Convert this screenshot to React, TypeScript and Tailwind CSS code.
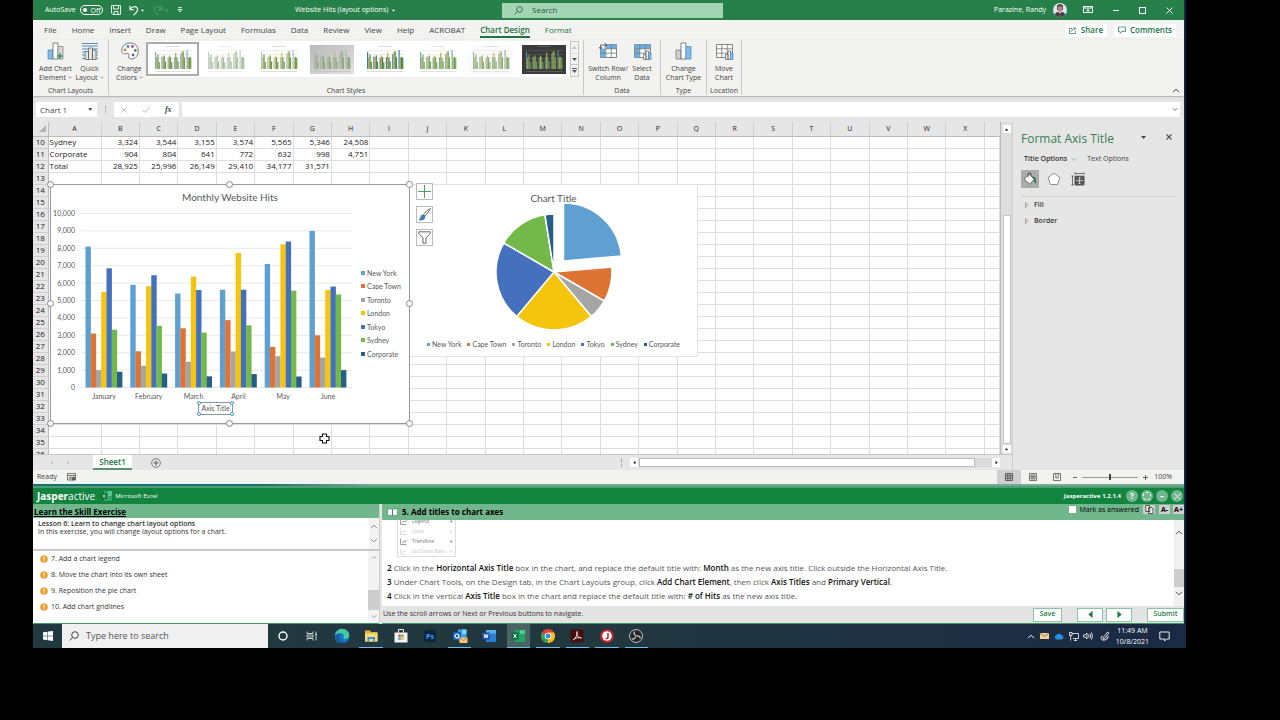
import React from "react";

const MONTHS = ["January", "February", "March", "April", "May", "June"];

const SERIES = [
  { name: "New York", color: "#5f9fd2", dot: "bg-[#5f9fd2]", values: [8100, 5900, 5400, 5620, 7100, 9000] },
  { name: "Cape Town", color: "#dd7433", dot: "bg-[#dd7433]", values: [3100, 2080, 3400, 3870, 2330, 3000] },
  { name: "Toronto", color: "#a5a5a5", dot: "bg-[#a5a5a5]", values: [1000, 1250, 1480, 2070, 1800, 1720] },
  { name: "London", color: "#f4c50c", dot: "bg-[#f4c50c]", values: [5500, 5820, 6370, 7730, 8230, 5600] },
  { name: "Tokyo", color: "#4470bd", dot: "bg-[#4470bd]", values: [6850, 6450, 5600, 5620, 8390, 5800] },
  { name: "Sydney", color: "#72b94a", dot: "bg-[#72b94a]", values: [3324, 3544, 3155, 3574, 5565, 5346] },
  { name: "Corporate", color: "#255e88", dot: "bg-[#255e88]", values: [904, 804, 641, 772, 632, 998] },
];

const COLUMNS = "ABCDEFGHIJKLMNOPQRSTUVWX".split("");

const ROWS: Record<number, string[]> = {
  10: ["Sydney", "3,324", "3,544", "3,155", "3,574", "5,565", "5,346", "24,508"],
  11: ["Corporate", "904", "804", "641", "772", "632", "998", "4,751"],
  12: ["Total", "28,925", "25,996", "26,149", "29,410", "34,177", "31,571"],
};

const Caret = ({ className = "" }: { className?: string }) => (
  <svg className={className} width="5" height="3" viewBox="0 0 5 3">
    <path d="M0 0h5L2.5 3z" fill="currentColor" />
  </svg>
);

const Chevron = ({ className = "" }: { className?: string }) => (
  <svg className={className} width="8" height="5" viewBox="0 0 8 5" fill="none" stroke="currentColor">
    <path d="M1 4.2 4 1.2l3 3" />
  </svg>
);

const TitleBar = () => (
  <header className="flex h-5 items-center bg-[#278049] text-[7px] text-white">
    <div className="flex w-[262px] items-center pl-3">
      <label htmlFor="autosave">AutoSave</label>
      <button id="autosave" className="ml-1 flex h-[10px] w-[23px] items-center gap-1 rounded-full border border-white pl-[2px] leading-none">
        <span className="h-1 w-1 rounded-full bg-white" />
        Off
      </button>
      <button aria-label="Save" className="ml-2">
        <svg width="10" height="10" viewBox="0 0 10 10" fill="none" stroke="#fff" strokeWidth=".9">
          <path d="M.5.5h9v9h-7.500l-1.500-1.500zM2.500.5v3.500h5V.5M3 9.500V6.500h4v3" />
        </svg>
      </button>
      <button aria-label="Undo" className="ml-2 flex items-center gap-px">
        <svg width="10" height="11" viewBox="0 0 10 11" fill="none" stroke="#fff" strokeWidth="1.100">
          <path d="M1 .8v4h4M1.200 4.600C3 1.500 6 1 7.700 2.500S9 6.500 4.500 10.300" />
        </svg>
        <Caret className="scale-75" />
      </button>
      <button aria-label="Redo" className="ml-2 flex items-center gap-px opacity-25">
        <svg width="10" height="11" viewBox="0 0 10 11" fill="none" stroke="#fff">
          <path d="M9 .8v4H5M8.800 4.600C7 1.500 4 1 2.300 2.500S1 6.500 5.500 10.300" />
        </svg>
        <Caret className="scale-75" />
      </button>
      <button aria-label="Customize Quick Access Toolbar" className="ml-2">
        <svg width="6" height="6" viewBox="0 0 6 6" fill="none" stroke="#fff" strokeWidth=".8">
          <path d="M1 .6h4M1 2.500h4L3 5z" />
        </svg>
      </button>
    </div>
    <button className="flex w-[207px] items-center">
      Website Hits (layout options)
      <Caret className="ml-[3px] scale-75" />
    </button>
    <div className="flex h-[15px] w-[221px] items-center bg-[#a3d5b4] pl-3 text-[8px] text-[#24593a]">
      <svg width="9" height="9" viewBox="0 0 9 9" fill="none" stroke="currentColor" strokeWidth=".8">
        <circle cx="5.500" cy="3.500" r="2.800" />
        <path d="M3.500 5.500.5 8.500" />
      </svg>
      <input aria-label="Search" placeholder="Search" className="ml-[9px] w-40 bg-transparent outline-none placeholder:text-[#24593a]" />
    </div>
    <div className="ml-auto flex items-center">
      <span>Parazine, Randy</span>
      <svg className="ml-[7px]" width="14" height="14" viewBox="0 0 14 14">
        <clipPath id="avatar"><circle cx="7" cy="7" r="7" /></clipPath>
        <g clipPath="url(#avatar)">
          <path fill="#dbe4ea" d="M0 0h14v14H0z" />
          <path fill="#4d4248" d="M4 2.500Q7-.5 10 2.500V7H4z" />
          <path fill="#bd8277" d="M4.700 3.500h4.600v4L7 9.500l-2.300-2z" />
          <path fill="#39424f" d="M1 14q1-5 4-5l2 1.500L9 9q3 0 4 5z" />
          <path fill="#a83844" d="M6.500 10h1l.5 4H6z" />
        </g>
      </svg>
      <button aria-label="Ribbon Display Options" className="ml-4">
        <svg width="10" height="8" viewBox="0 0 10 8" fill="none" stroke="#fff">
          <path d="M.5.5h9v6h-9zM.5 2h9M5 6.500v-3M3.500 4.700 5 3.300l1.500 1.400" />
        </svg>
      </button>
      <button aria-label="Minimize" className="ml-5 h-px w-[6px] bg-white" />
      <button aria-label="Maximize" className="ml-5 h-[7px] w-[7px] border border-white" />
      <button aria-label="Close" className="mr-[11px] ml-5">
        <svg width="7" height="7" viewBox="0 0 7 7" stroke="#fff"><path d="m.5.5 6 6M6.500.5l-6 6" /></svg>
      </button>
    </div>
  </header>
);

const TABS = ["File", "Home", "Insert", "Draw", "Page Layout", "Formulas", "Data", "Review", "View", "Help", "ACROBAT"];

const RibbonTabs = () => (
  <nav className="flex h-5 items-center gap-[15px] bg-[#f2f2f0] pr-2 pl-[11px] text-[8px] leading-3 text-[#444]">
    {TABS.map((tab) => (
      <button key={tab}>{tab}</button>
    ))}
    <button className="border-b-2 border-[#217346] pt-[2px] font-semibold text-[#217346]">Chart Design</button>
    <button className="text-[#217346]">Format</button>
    <button className="ml-auto flex h-[13px] items-center gap-1 bg-white px-1 font-semibold text-[#217346]">
      <svg width="8" height="8" viewBox="0 0 8 8" fill="none" stroke="currentColor" strokeWidth=".7">
        <path d="M3 2.500H.5v5h6V5M2.500 5.500q0-3 3.500-3M4.800.8l2 1.700-2 1.700" />
      </svg>
      Share
    </button>
    <button className="-ml-2 flex h-[13px] items-center gap-1 bg-white px-1 font-semibold text-[#217346]">
      <svg width="8" height="8" viewBox="0 0 8 8" fill="none" stroke="currentColor" strokeWidth=".7">
        <path d="M.5 1h7v4.500H4L2 7.300V5.500H.5z" />
      </svg>
      Comments
    </button>
  </nav>
);

const RibbonButton = ({ icon, lines, width, menu }: { icon: React.ReactNode; lines: string[]; width: string; menu?: boolean }) => (
  <button className={`flex flex-col items-center text-[7px] leading-[9px] text-[#444] ${width}`}>
    <span className="mb-[3px] flex h-5 items-center">{icon}</span>
    <span className="whitespace-nowrap">{lines[0]}</span>
    <span className="flex items-center gap-[2px] whitespace-nowrap">
      {lines[1]}
      {menu && <Chevron className="w-1 rotate-180" />}
    </span>
  </button>
);

const Group = ({ label, width, children }: { label: string; width: string; children: React.ReactNode }) => (
  <section className={`flex flex-col border-r border-[#c8c8c6] ${width}`}>
    <div className="flex flex-1 justify-center pt-px">{children}</div>
    <h2 className="text-center text-[7px] leading-[9px] text-[#444]">{label}</h2>
  </section>
);

const ChartTypeIcon = ({ plus }: { plus?: boolean }) => (
  <svg width="17" height="18" viewBox="0 0 17 18" strokeWidth=".8">
    <path d="M1 8h5v9H1z" fill={plus ? "#83bce8" : "#d0d0d0"} stroke={plus ? "#4f91c5" : "#777"} />
    <path d="M6 1h5v16H6z" fill="#fff" stroke="#666" />
    <path d="M11 4.500h5V17h-5z" fill={plus ? "#d6d6d6" : "#83bce8"} stroke={plus ? "#888" : "#4f91c5"} />
    {plus && <path d="M13 11v6M10 14h6" stroke="#3e9a5d" strokeWidth="1.500" />}
  </svg>
);

const QuickLayoutIcon = () => (
  <svg width="18" height="18" viewBox="0 0 18 18">
    <path d="M1 1.500h16M1 4h16M1 7h16M1 10h16M1 13h16M1 16.500h16" stroke="#4e8fc4" />
    <path d="M4 9.500h3.500v8H4zM7.500 6h4v11.500h-4zM11.500 8H15v9.500h-3.500z" fill="#e4e4e4" stroke="#666" strokeWidth=".8" />
  </svg>
);

const PaletteIcon = () => (
  <svg width="18" height="18" viewBox="0 0 18 18">
    <path d="M9 1C4 1 .8 4.300.8 8.500c0 3 2.200 4 4.200 3 1.800-.8 3.500.2 2.800 2-.6 2 .6 3.700 3.200 3.500 4-.3 6.200-4 6.200-8C17.200 4 14 1 9 1z" fill="#fff" stroke="#666" strokeWidth=".9" />
    <circle cx="4" cy="8" r="1.400" fill="#d2814f" />
    <circle cx="7" cy="4.500" r="1.400" fill="#587fbd" />
    <circle cx="11.500" cy="4.500" r="1.400" fill="#a64b71" />
    <circle cx="14.300" cy="8.500" r="1.400" fill="#42915d" />
    <circle cx="12" cy="13" r="1.400" fill="#7b519c" />
  </svg>
);

const TableIcon = ({ kind }: { kind: "switch" | "select" | "move" }) => (
  <svg width="19" height="18" viewBox="0 0 19 18" strokeWidth=".8">
    <path d="M1.500 2.500h16v13h-16z" fill="#fff" stroke="#666" />
    {kind === "select" && <path d="M1.500 2.500h16v4.300h-16zM1.500 6.800h5v8.700h-5z" fill="#6db1e3" />}
    {kind === "switch" && <path d="M6.500 2.500h11v4.300h-11zM1.500 6.800h5v8.700h-5z" fill="#6db1e3" />}
    <path d="M1.500 6.800h16M1.500 11.200h16M6.800 2.500v13M12.200 2.500v13" stroke="#777" fill="none" />
    {kind === "switch" ? (
      <>
        <path d="M0 0h6.500v6.500H0z" fill="#f2f2f0" />
        <path d="M1.500 6.500V3H7M5.500.8 8 3 5.500 5.200M0 5l1.500 2L3.200 5" fill="none" stroke="#444" />
      </>
    ) : (
      <>
        <path d="M10.500 12.500h2.500v5h-2.500zM13 9h2.500v8.500H13z" fill="#fff" stroke="#666" />
        <path d="M15.500 11H18v6.500h-2.500z" fill="#83bce8" stroke="#4f91c5" />
      </>
    )}
  </svg>
);

const THUMBS = [
  { box: "bg-white", colors: ["#7faecb", "#b5a04d", "#6c9b52"], grid: "#ddd" },
  { box: "bg-white", colors: ["#b9cfdb", "#d3ccab", "#a5c19a"], grid: "#eee" },
  { box: "bg-white", colors: ["#a5c3d6", "#d6c34c", "#6b9655"], grid: "#ddd" },
  { box: "bg-gradient-to-br from-[#b8b8b8] to-[#e2e2e2]", colors: ["#a0b4bb", "#bcb78a", "#8ea77f"], grid: "#c5c5c5" },
  { box: "bg-white", colors: ["#3f7fae", "#d69b29", "#3d8845"], grid: "#ddd" },
  { box: "bg-white", colors: ["#75a6c1", "#c5ab40", "#6da857"], grid: "#e5e5e5" },
  { box: "bg-[#fbfbfb]", colors: ["#93b2c2", "#cdb85d", "#85ae76"], grid: "#e5e5e5" },
  { box: "bg-[#3b3b3b]", colors: ["#4e8aa5", "#c6a73c", "#6a9d51"], grid: "#5a5a5a" },
];

const StyleThumb = ({ box, colors, grid }: { box: string; colors: string[]; grid: string }) => (
  <svg className={box} width="44" height="29" viewBox="0 0 44 29">
    <path d="M15 1.500h14M4 26.500h36" stroke={grid} />
    <path d="M3 5.500h38M3 9.500h38M3 13.500h38M3 17.500h38M3 21.500h38" stroke={grid} strokeWidth=".6" />
    {MONTHS.map((month, m) =>
      [0, 3, 4, 5].map((s, i) => (
        <rect
          key={month + s}
          x={4 + m * 6.300 + i * 1.200}
          y={24 - SERIES[s].values[m] * 0.0021}
          width="1.200"
          height={SERIES[s].values[m] * 0.0021}
          fill={colors[Math.min(i, 2)]}
        />
      ))
    )}
  </svg>
);

const Ribbon = () => (
  <div className="relative flex h-14 bg-[#f2f2f0] pb-[1px] shadow-sm">
    <Group label="Chart Layouts" width="w-[76px]">
      <RibbonButton icon={<ChartTypeIcon plus />} lines={["Add Chart", "Element"]} width="w-[38px]" menu />
      <RibbonButton icon={<QuickLayoutIcon />} lines={["Quick", "Layout"]} width="w-[30px]" menu />
    </Group>
    <Group label="Chart Styles" width="w-[475px]">
      <RibbonButton icon={<PaletteIcon />} lines={["Change", "Colors"]} width="w-[33px]" menu />
      <div className="flex h-9 items-center bg-white">
        {THUMBS.map((thumb, i) => (
          <button
            key={i}
            aria-label={`Style ${i + 1}`}
            className={`flex h-[34px] w-[53px] items-center justify-center ${i === 0 ? "border-2 border-[#ababab]" : ""}`}
          >
            <StyleThumb {...thumb} />
          </button>
        ))}
      </div>
      <div className="flex h-9 w-[9px] flex-col divide-y divide-[#c6c6c6] border border-[#c6c6c6] text-[#555]">
        <button aria-label="Previous row" className="flex flex-1 items-center justify-center opacity-30"><Caret className="rotate-180" /></button>
        <button aria-label="Next row" className="flex flex-1 items-center justify-center"><Caret /></button>
        <button aria-label="More styles" className="flex flex-1 flex-col items-center justify-center gap-px">
          <span className="h-px w-[5px] bg-[#555]" />
          <Caret />
        </button>
      </div>
    </Group>
    <Group label="Data" width="w-[77px]">
      <RibbonButton icon={<TableIcon kind="switch" />} lines={["Switch Row/", "Column"]} width="w-[40px]" />
      <RibbonButton icon={<TableIcon kind="select" />} lines={["Select", "Data"]} width="w-[28px]" />
    </Group>
    <Group label="Type" width="w-[46px]">
      <RibbonButton icon={<ChartTypeIcon />} lines={["Change", "Chart Type"]} width="w-[40px]" />
    </Group>
    <Group label="Location" width="w-[35px]">
      <RibbonButton icon={<TableIcon kind="move" />} lines={["Move", "Chart"]} width="w-[30px]" />
    </Group>
    <button aria-label="Collapse the Ribbon" className="mt-auto mr-1 mb-[2px] ml-auto text-[#444]"><Chevron /></button>
  </div>
);

const FormulaBar = () => (
  <div className="flex h-[26px] items-center border-t border-[#cfcfcf] bg-[#e6e6e6] pr-1 pl-[3px] text-[8px] text-[#444]">
    <div className="flex h-[15px] w-[61px] items-center bg-white pr-1 pl-1">
      <input aria-label="Name Box" defaultValue="Chart 1" className="w-full min-w-0 bg-transparent outline-none" />
      <Caret />
    </div>
    <span className="mx-2 h-2 border-l border-dotted border-[#999]" />
    <div className="flex h-[15px] w-[65px] items-center justify-around bg-white">
      <button aria-label="Cancel">
        <svg width="6" height="6" viewBox="0 0 6 6" stroke="#bbb"><path d="m.5.5 5 5M5.500.5l-5 5" /></svg>
      </button>
      <button aria-label="Enter">
        <svg width="8" height="6" viewBox="0 0 8 6" fill="none" stroke="#bbb"><path d="m.5 3 2.200 2.300L7.500.5" /></svg>
      </button>
      <button className="font-['Liberation_Serif',serif] font-bold italic">fx</button>
    </div>
    <input aria-label="Formula Bar" className="ml-[3px] h-[15px] flex-1 bg-white outline-none" />
    <button aria-label="Expand Formula Bar" className="flex h-[15px] w-[10px] items-center justify-center bg-white">
      <Chevron className="w-[6px] rotate-180" />
    </button>
  </div>
);

const Grid = () => (
  <table className="w-full table-fixed border-collapse text-[8px] leading-none text-[#222]">
    <colgroup>
      <col className="w-[15px]" />
      <col className="w-[53px]" />
      {COLUMNS.slice(1).map((c) => (
        <col key={c} />
      ))}
      <col className="w-[15px]" />
    </colgroup>
    <thead>
      <tr className="h-[14px] bg-[#e6e6e6]">
        <th className="border-r border-b border-[#bcbcbc] p-0">
          <svg className="ml-[6px]" width="7" height="7" viewBox="0 0 7 7"><path d="M7 0v7H0z" fill="#b4b4b4" /></svg>
        </th>
        {COLUMNS.map((c) => (
          <th key={c} className="border-r border-b border-r-[#cfcfcf] border-b-[#bcbcbc] p-0 text-[7px] font-normal">{c}</th>
        ))}
        <th className="border-b border-[#bcbcbc]" />
      </tr>
    </thead>
    <tbody>
      {Array.from({ length: 27 }, (_, i) => i + 10).map((row) => (
        <tr key={row} className="h-3">
          <th className="border-r border-b border-r-[#bcbcbc] border-b-[#cfcfcf] bg-[#e6e6e6] p-0 font-normal">{row}</th>
          {[...COLUMNS, "Y"].map((c, i) => (
            <td key={c} className={`border-r border-b border-[#dedede] px-px py-0 whitespace-nowrap ${i === 0 ? "text-left" : "text-right"}`}>
              {ROWS[row]?.[i]}
            </td>
          ))}
        </tr>
      ))}
    </tbody>
  </table>
);

const BarChart = () => (
  <svg className="block" width="310" height="194" viewBox="0 0 310 194">
    {Array.from({ length: 11 }, (_, i) => (
      <g key={i}>
        <path d={`M30 ${178.500 - i * 17.400}H301`} stroke="#e2e2e2" strokeWidth=".8" />
        <text x="24" y={181 - i * 17.400} textAnchor="end" fontSize="7" fill="#595959">
          {(i * 1000).toLocaleString("en-US")}
        </text>
      </g>
    ))}
    {MONTHS.map((month, m) => (
      <g key={month}>
        {SERIES.map((s, i) => (
          <rect
            key={s.name}
            x={34.500 + m * 44.800 + i * 5.250}
            y={178.500 - s.values[m] * 0.0174}
            width="5.400"
            height={s.values[m] * 0.0174}
            fill={s.color}
          />
        ))}
        <text x={53 + m * 44.800} y="190" textAnchor="middle" fontSize="7" fill="#595959">{month}</text>
      </g>
    ))}
  </svg>
);

// Slice boundaries in degrees, clockwise from twelve o'clock
const SLICES = [0, 85, 120, 140, 220, 300, 351, 360];

const slicePath = (from: number, to: number, cx: number, cy: number, r: number) => {
  const point = (deg: number) => {
    const rad = (deg * Math.PI) / 180;
    return `${cx + r * Math.sin(rad)} ${cy - r * Math.cos(rad)}`;
  };
  return `M${cx} ${cy}L${point(from)}A${r} ${r} 0 0 1 ${point(to)}Z`;
};

const PieChart = () => (
  <svg className="block" width="130" height="130" viewBox="0 0 130 130">
    {SERIES.map((s, i) => (
      <path
        key={s.name}
        d={i === 0 ? slicePath(SLICES[0], SLICES[1], 68.500, 59, 58) : slicePath(SLICES[i], SLICES[i + 1], 59, 70, 58)}
        fill={s.color}
        stroke="#fff"
        strokeWidth="1.500"
      />
    ))}
  </svg>
);

const HANDLES = [
  "-left-[4px] -top-[4px]",
  "left-1/2 -ml-[4px] -top-[4px]",
  "-right-[4px] -top-[4px]",
  "-left-[4px] top-1/2 -mt-[4px]",
  "-right-[4px] top-1/2 -mt-[4px]",
  "-left-[4px] -bottom-[4px]",
  "left-1/2 -ml-[4px] -bottom-[4px]",
  "-right-[4px] -bottom-[4px]",
];

const CORNERS = ["-left-[2px] -top-[2px]", "-right-[2px] -top-[2px]", "-left-[2px] -bottom-[2px]", "-right-[2px] -bottom-[2px]"];

const ChartTools = () => (
  <div className="absolute top-[61px] left-[383px] flex flex-col gap-[6px]">
    <button aria-label="Chart Elements" className="flex h-[17px] w-[17px] items-center justify-center border border-[#bbb] bg-white">
      <svg width="13" height="13" viewBox="0 0 13 13" stroke="#4da067"><path d="M6.500 0v13M0 6.500h13" /></svg>
    </button>
    <button aria-label="Chart Styles" className="flex h-[17px] w-[17px] items-center justify-center border border-[#bbb] bg-white">
      <svg width="13" height="13" viewBox="0 0 13 13">
        <path d="M12.500.5Q9 2 5.500 6.500L7 8q4-4 5.500-7.500z" fill="#fff" stroke="#555" strokeWidth=".8" />
        <path d="M5 6.500q-2 0-2.500 2.200T.3 12Q4 13 6 11.500T7 8z" fill="#3c7fc0" />
      </svg>
    </button>
    <button aria-label="Chart Filters" className="flex h-[17px] w-[17px] items-center justify-center border border-[#bbb] bg-white">
      <svg width="13" height="13" viewBox="0 0 13 13" fill="#fff" stroke="#555" strokeWidth=".9">
        <path d="M.8.800h11.400v1.500L8 7v5.200H5V7L.8 2.300z" />
      </svg>
    </button>
  </div>
);

const Charts = () => (
  <div className="font-['Lato','Open_Sans',sans-serif] text-[#595959]">
    <figure className="absolute top-[62px] left-[376px] flex h-[173px] w-[289px] flex-col items-center border border-[#e2e2e2] bg-white">
      <figcaption className="pt-[7px] text-[10px] leading-3">Chart Title</figcaption>
      <div className="-mt-[2px] ml-3"><PieChart /></div>
      <ul className="flex gap-[6px] pt-[6px] text-[7px] leading-[13px]">
        {SERIES.map((s) => (
          <li key={s.name} className="flex items-center gap-[2px] whitespace-nowrap">
            <span className={`h-[3px] w-[3px] ${s.dot}`} />
            {s.name}
          </li>
        ))}
      </ul>
    </figure>
    <figure className="absolute top-[62px] left-[17px] h-[240px] w-[360px] border border-[#999] bg-white">
      <figcaption className="pt-[6px] text-center text-[10px] leading-3">Monthly Website Hits</figcaption>
      <div className="flex pt-[6px]">
        <BarChart />
        <ul className="pt-[57px] text-[7px] leading-[13px]">
          {SERIES.map((s) => (
            <li key={s.name} className="flex h-[14px] items-center gap-[2px] whitespace-nowrap not-first:-mt-px odd:mt-0">
              <span className={`h-1 w-1 ${s.dot}`} />
              {s.name}
            </li>
          ))}
        </ul>
      </div>
      <div className="absolute top-[217px] left-[147px] flex h-[13px] w-[35px] items-center justify-center border border-[#7d97ad] text-[7px] leading-none">
        <span className="whitespace-nowrap">Axis Title</span>
        {CORNERS.map((c) => (
          <span key={c} className={`absolute h-1 w-1 rounded-full border border-[#4a93c7] bg-white ${c}`} />
        ))}
      </div>
      {HANDLES.map((h) => (
        <span key={h} className={`absolute h-[7px] w-[7px] rounded-full border border-[#888] bg-white ${h}`} />
      ))}
    </figure>
    <ChartTools />
    <svg className="absolute top-[311px] left-[286px]" width="11" height="11" viewBox="0 0 11 11">
      <path d="M3.500 1h4v2.500H10v4H7.500V10h-4V7.500H1v-4h2.500z" fill="#fff" stroke="#111" strokeWidth="1.100" />
    </svg>
  </div>
);

const SheetTabs = () => (
  <div className="flex h-4 items-center border-t border-[#c8c8c8] bg-[#e6e6e6] pr-3">
    <button aria-label="Previous sheet" className="ml-4 text-[#b5b5b5]"><Caret className="rotate-90 scale-75" /></button>
    <button aria-label="Next sheet" className="ml-3 text-[#b5b5b5]"><Caret className="-rotate-90 scale-75" /></button>
    <button className="ml-[22px] h-[15px] w-[39px] border-b-2 border-[#5a9372] bg-white text-[8px] leading-none font-semibold text-[#217346]">Sheet1</button>
    <button aria-label="New sheet" className="ml-[19px]">
      <svg width="10" height="10" viewBox="0 0 10 10" fill="none" stroke="#666" strokeWidth=".8">
        <circle cx="5" cy="5" r="4.400" />
        <path d="M5 2.500v5M2.500 5h5" strokeWidth="1.200" />
      </svg>
    </button>
    <span className="mr-2 ml-auto h-2 border-l border-dotted border-[#888]" />
    <div className="flex h-[9px] w-[370px] bg-[#dadada]">
      <button aria-label="Scroll left" className="flex w-2 items-center justify-center bg-white"><Caret className="rotate-90 scale-75" /></button>
      <span className="ml-px w-[336px] border border-[#bbb] bg-white" />
      <button aria-label="Scroll right" className="ml-auto flex w-2 items-center justify-center bg-white"><Caret className="-rotate-90 scale-75" /></button>
    </div>
  </div>
);

const VerticalScroll = () => (
  <div className="flex w-3 flex-col items-center border-l border-[#bbb] bg-[#dedede]">
    <button aria-label="Scroll up" className="mt-[3px] flex h-2 w-2 items-center justify-center bg-white"><Caret className="rotate-180 scale-75" /></button>
    <span className="mt-[82px] w-2 flex-1 border border-[#c4c4c4] bg-white" />
    <button aria-label="Scroll down" className="my-px flex h-2 w-2 items-center justify-center bg-white"><Caret className="scale-75" /></button>
  </div>
);

const FormatPane = () => (
  <aside className="w-[172px] border-l border-[#cfcfcf] bg-[#e6e6e6] pr-2 pl-2 text-[7px] text-[#444]">
    <div className="flex items-center pt-2">
      <h2 className="flex-1 text-[12px] leading-[18px] text-[#3a7a56]">Format Axis Title</h2>
      <button aria-label="Task Pane Options" className="mb-1"><Caret /></button>
      <button aria-label="Close pane" className="mr-1 mb-1 ml-5">
        <svg width="6" height="6" viewBox="0 0 6 6" stroke="#555" strokeWidth="1.200"><path d="m.5.5 5 5M5.500.5l-5 5" /></svg>
      </button>
    </div>
    <div className="mt-[6px] flex items-center pl-[3px] leading-[10px]">
      <button className="font-semibold text-[#333]">Title Options</button>
      <Chevron className="ml-1 w-[6px] rotate-180 text-[#5da5a5]" />
      <button className="ml-[10px]">Text Options</button>
    </div>
    <div className="mt-[6px] flex items-center gap-2">
      <button aria-label="Fill &amp; Line" className="flex h-[18px] w-[18px] items-center justify-center bg-[#ababab]">
        <svg width="14" height="14" viewBox="0 0 14 14">
          <path d="M6 2 11.500 7.500 6.500 12 1.200 7.200z" fill="#fff" stroke="#444" strokeWidth=".8" />
          <path d="M5 5V1.500q1.500-1.500 3 0V4" fill="none" stroke="#444" strokeWidth=".8" />
          <path d="M9 4q4 1 4 4v4q-2-1-2-4.500z" fill="#26774a" />
        </svg>
      </button>
      <button aria-label="Effects">
        <svg width="14" height="14" viewBox="0 0 14 14"><path d="M7 1.200 12.800 5.500l-2.200 7H3.400l-2.200-7z" fill="#fff" stroke="#777" strokeWidth=".8" /></svg>
      </button>
      <button aria-label="Size &amp; Properties" className="ml-[2px]">
        <svg width="14" height="14" viewBox="0 0 14 14" fill="none" stroke="#555">
          <path d="M4 1.500h9M4 .2v2.600M13 .2v2.600M1.500 4v9M.2 4h2.600M.2 13h2.600" strokeWidth=".8" />
          <path d="M4 4.200h9V13H4z" fill="#555" />
          <path d="M8.500 5.200v6.800M5 8.600h7M7.300 6.400l1.200-1.200 1.200 1.200M7.300 10.800l1.200 1.200 1.200-1.200" stroke="#eee" strokeWidth=".7" />
        </svg>
      </button>
    </div>
    <ul className="mt-2 border-t border-[#cfcfcf] font-semibold text-[#333]">
      {["Fill", "Border"].map((name) => (
        <li key={name} className="h-4">
          <button className="flex h-full items-center gap-[5px] pl-[4px]">
            <svg width="4" height="6" viewBox="0 0 4 6" fill="none" stroke="#888" strokeWidth=".7"><path d="M.5.5 3.200 3 .5 5.500z" /></svg>
            {name}
          </button>
        </li>
      ))}
    </ul>
  </aside>
);

const StatusBar = () => (
  <footer className="flex h-[14px] items-center bg-[#f2f2f0] pl-1 text-[7px] text-[#444]">
    <span>Ready</span>
    <svg className="ml-[10px]" width="9" height="8" viewBox="0 0 9 8" fill="none" stroke="#555" strokeWidth=".8">
      <path d="M.5.500h8v6.500h-8zM.5 2.500h8M2 4.300h3M2 5.700h2" />
      <circle cx="6.500" cy="5.500" r="1.500" fill="#555" />
    </svg>
    <div className="ml-auto flex h-full items-center">
      <button aria-label="Normal" className="flex h-full w-6 items-center justify-center bg-[#cfcfcf]">
        <svg width="8" height="8" viewBox="0 0 8 8" fill="none" stroke="#444" strokeWidth=".8"><path d="M.5.5h7v7h-7zM.5 2.800h7M.5 5.200h7M2.800.5v7M5.200.5v7" /></svg>
      </button>
      <button aria-label="Page Layout View" className="flex w-6 justify-center">
        <svg width="8" height="8" viewBox="0 0 8 8" fill="none" stroke="#555" strokeWidth=".8"><path d="M.5.5h7v7h-7zM2 2h4v4H2zM2.500 3.500h3M2.500 4.700h3" /></svg>
      </button>
      <button aria-label="Page Break Preview" className="flex w-6 justify-center">
        <svg width="8" height="8" viewBox="0 0 8 8" fill="none" stroke="#555" strokeWidth=".8"><path d="M.5.5h7v7h-7zM2.800.5v4.500h2.400V.5" /></svg>
      </button>
      <button aria-label="Zoom out" className="ml-1 h-px w-1 bg-[#666]" />
      <input
        aria-label="Zoom"
        type="range"
        className="mx-[5px] h-px w-14 appearance-none bg-[#999] [&::-webkit-slider-thumb]:h-[6px] [&::-webkit-slider-thumb]:w-[2px] [&::-webkit-slider-thumb]:appearance-none [&::-webkit-slider-thumb]:bg-[#444]"
      />
      <button aria-label="Zoom in">
        <svg width="5" height="5" viewBox="0 0 5 5" stroke="#666"><path d="M2.500 0v5M0 2.500h5" /></svg>
      </button>
      <span className="mr-3 ml-[6px]">100%</span>
    </div>
  </footer>
);

const TASKS = ["7. Add a chart legend", "8. Move the chart into its own sheet", "9. Reposition the pie chart", "10. Add chart gridlines"];

const MENU = [
  { name: "Legend", tone: "text-[#777]" },
  { name: "Lines", tone: "text-[#c9c9c9]" },
  { name: "Trendline", tone: "text-[#777]" },
  { name: "Up/Down Bars", tone: "text-[#c9c9c9]" },
];

const navButton = "flex h-[14px] items-center justify-center border border-[#8cc3a3] bg-white font-semibold text-[#1b7a45]";
const roundButton = "flex h-3 w-3 items-center justify-center rounded-full bg-[#72b68e] text-[8px] leading-none font-bold";

const JasperHeader = () => (
  <header className="flex h-4 items-center bg-[#12843f] pr-px pl-1 text-white">
    <h1 className="text-[10px] leading-none"><b>Jasper</b>active</h1>
    <svg className="ml-[6px]" width="11" height="10" viewBox="0 0 11 10">
      <path d="M3 0h8v10H3z" fill="#2fa866" />
      <path d="M7 0h4v5H7z" fill="#56c68a" />
      <path d="M0 2.500h6v5.500H0z" fill="#0e6a37" />
      <path d="m1.700 3.700 2.600 3M4.300 3.700l-2.600 3" stroke="#fff" strokeWidth=".8" />
    </svg>
    <span className="ml-[3px] text-[6px]">Microsoft Excel</span>
    <span className="mr-[5px] ml-auto text-[6px] font-bold">Jasperactive 1.2.1.4</span>
    <div className="flex gap-[3px]">
      <button aria-label="Help" className={roundButton}>?</button>
      <button aria-label="Fullscreen" className={roundButton}>
        <span className="h-2 w-2 rounded-[3px] border border-dashed border-white" />
      </button>
      <button aria-label="Minimize exercise" className={roundButton}>–</button>
      <button aria-label="Close exercise" className={roundButton}>
        <svg width="7" height="7" viewBox="0 0 7 7" stroke="#fff"><path d="m.5.5 6 6M6.500.5l-6 6" /></svg>
      </button>
    </div>
  </header>
);

const ExerciseList = () => (
  <section className="flex w-[347px] flex-col border-r border-[#ccc] text-[7px] text-[#333]">
    <h2 className="h-[14px] bg-[#72b68e] pl-px text-[8px] leading-[15px] font-bold text-black underline">Learn the Skill Exercise</h2>
    <div className="flex h-[31px] bg-white">
      <div className="flex-1 pt-[2px] pl-[5px] leading-2">
        <h3 className="font-semibold">Lesson 6: Learn to change chart layout options</h3>
        <p>In this exercise, you will change layout options for a chart.</p>
      </div>
      <div className="flex w-[10px] flex-col items-center justify-center gap-[9px] bg-[#f3f3f3] text-[#888]">
        <Chevron />
        <Chevron className="rotate-180" />
      </div>
    </div>
    <div className="flex h-[75px] border-t-2 border-b border-t-[#c9c9c9] border-b-[#3f9868] bg-white">
      <ol className="flex-1 pl-[7px]">
        {TASKS.map((task) => (
          <li key={task} className="flex h-4 items-center gap-[3px]">
            <svg width="8" height="8" viewBox="0 0 8 8">
              <circle cx="4" cy="4" r="3.800" fill="#efa12d" />
              <path d="M4 1.500v3M4 5.500v1" stroke="#fff" strokeWidth="1.200" />
            </svg>
            <a href="#task">{task}</a>
          </li>
        ))}
      </ol>
      <div className="flex w-[11px] flex-col items-center bg-[#f3f3f3] py-1 text-[#888]">
        <Chevron className="w-[6px]" />
        <span className="mt-auto mb-1 h-5 w-full bg-[#cdcdcd]" />
        <Chevron className="w-[6px] rotate-180" />
      </div>
    </div>
  </section>
);

const Instructions = () => (
  <section className="ml-[2px] flex min-w-0 flex-1 flex-col text-[8px] text-[#555]">
    <header className="flex h-4 items-center bg-[#72b68e] pl-[5px] text-black">
      <svg width="11" height="8" viewBox="0 0 11 8">
        <path d="M.5 1h4l1 .7 1-.7h4v6.500H.5z" fill="#fff" stroke="#2f8d57" strokeWidth=".6" />
        <path d="M5.500 1.700v5.800" stroke="#2f8d57" />
      </svg>
      <h2 className="ml-1 flex-1 font-bold">5. Add titles to chart axes</h2>
      <div className="flex items-center self-start pt-px text-[7px] leading-none">
        <input id="answered" type="checkbox" className="h-[7px] w-[7px] appearance-none bg-white" />
        <label htmlFor="answered" className="ml-[3px]">Mark as answered</label>
        <button aria-label="Copy" className="ml-1 flex h-[9px] w-3 items-center justify-center bg-[#cfcfcf]">
          <svg width="9" height="9" viewBox="0 0 9 9" fill="#eee" stroke="#333" strokeWidth=".8"><path d="M.8.500h4v6h-4zM3.500 2.500h3l1.500 1.500v4.500H3.500z" /></svg>
        </button>
        <button className="ml-1 h-[9px] w-[11px] bg-[#cfcfcf] font-bold">A-</button>
        <button className="ml-[3px] h-[9px] w-[11px] bg-[#cfcfcf] font-bold">A+</button>
      </div>
    </header>
    <div className="flex h-[86px] bg-white">
      <div className="min-w-0 flex-1 overflow-hidden pl-[5px]">
        <ul className="ml-[10px] flex h-[37px] w-[59px] flex-col justify-end border border-t-0 border-[#ddd] text-[5px] leading-[10px]">
          {MENU.map((item) => (
            <li key={item.name} className={`flex items-center gap-[5px] px-[2px] ${item.tone}`}>
              <svg width="7" height="7" viewBox="0 0 7 7" fill="none" stroke="currentColor" strokeWidth=".7"><path d="M.5.5v6h6M2 5l2-2 1 1 1.500-2" /></svg>
              <span className="flex-1 whitespace-nowrap">{item.name}</span>
              <Caret className="w-[3px] -rotate-90" />
            </li>
          ))}
        </ul>
        <ol className="pt-[4px] leading-[14px] whitespace-nowrap [&_b]:font-semibold [&_b]:text-[#111]">
          <li><b>2</b> Click in the <b>Horizontal Axis Title</b> box in the chart, and replace the default title with: <b>Month</b> as the new axis title. Click outside the Horizontal Axis Title.</li>
          <li><b>3</b> Under Chart Tools, on the Design tab, in the Chart Layouts group, click <b>Add Chart Element</b>, then click <b>Axis Titles</b> and <b>Primary Vertical</b>.</li>
          <li><b>4</b> Click in the vertical <b>Axis Title</b> box in the chart and replace the default title with: <b># of Hits</b> as the new axis title.</li>
        </ol>
      </div>
      <div className="flex w-[10px] flex-col items-center bg-[#f0f0f0] pt-[10px] pb-[10px] text-[#444]">
        <Chevron />
        <span className="mt-auto mb-1 h-[18px] w-full bg-[#cdcdcd]" />
        <Chevron className="rotate-180" />
      </div>
    </div>
    <footer className="flex h-[18px] items-center border-b border-[#3f9868] bg-[#e3e3e3] pl-px text-[7px] text-[#333]">
      <span className="flex-1">Use the scroll arrows or Next or Previous buttons to navigate.</span>
      <button className={`${navButton} w-[29px]`}>Save</button>
      <button aria-label="Previous" className={`${navButton} ml-[15px] w-[26px]`}><Caret className="scale-150 rotate-90" /></button>
      <button aria-label="Next" className={`${navButton} ml-[3px] w-[26px]`}><Caret className="scale-150 -rotate-90" /></button>
      <button className={`${navButton} ml-[15px] w-[37px]`}>Submit</button>
    </footer>
  </section>
);

const TASKBAR = [
  { name: "Cortana", state: "", icon: <circle cx="8" cy="8" r="4" fill="none" stroke="#fff" strokeWidth="1.400" /> },
  {
    name: "Task View",
    state: "",
    icon: <path d="M3 3.500v2h6v-2M3 12.500v-2h6v2M3 7h6v2H3zM12 3.500v9M11 6.500h2" fill="none" stroke="#ddd" strokeWidth=".9" />,
  },
  {
    name: "Microsoft Edge",
    state: "",
    icon: (
      <>
        <circle cx="8" cy="8" r="7.300" fill="#1677c5" />
        <path d="M1 7.500C1.500 3 5 .7 8 .7c4.500 0 7.300 3 7.300 6.500 0 2.500-2 3.800-4 3.800-1.500 0-2.300-.8-1.800-1.600C10.500 7 8.500 5 6 5.300 3.500 5.500 1.700 6.500 1 7.500z" fill="#42c8a1" />
        <path d="M5.200 8c-.5 4 3 6.500 7 5.200C8 17 1.500 14 1 8.500 2 6.500 4.500 5.500 6.500 6 5.800 6.500 5.300 7 5.200 8z" fill="#1b58a5" />
      </>
    ),
  },
  {
    name: "File Explorer",
    state: "border-[#76b9ed]",
    icon: (
      <>
        <path d="M2 2.500h5l1 1.500h6.500v9.500H2z" fill="#e5b13a" />
        <path d="M2 5.500h12.500v8H2z" fill="#f8da7b" />
        <path d="M4.500 9h7.500v4.500h-1.800V11H6.300v2.500H4.500z" fill="#3a91d4" />
      </>
    ),
  },
  {
    name: "Microsoft Store",
    state: "",
    icon: (
      <>
        <path d="M1.500 4.500h13v10h-13z" fill="#f3f3f3" />
        <path d="M5.500 4.500v-3h5v3" fill="none" stroke="#f3f3f3" />
        <path d="M5.300 6.500h2.500V9H5.300z" fill="#e85c3b" />
        <path d="M8.200 6.500h2.500V9H8.200z" fill="#80b941" />
        <path d="M5.300 9.400h2.500v2.500H5.300z" fill="#3aa5e5" />
        <path d="M8.200 9.400h2.500v2.500H8.200z" fill="#f2ba32" />
      </>
    ),
  },
  {
    name: "Photoshop",
    state: "",
    icon: (
      <>
        <rect x="2" y="2" width="12" height="12" rx="2" fill="#0a2540" />
        <text x="8" y="10.500" textAnchor="middle" fontSize="7" fontWeight="700" fill="#3aa5f5">Ps</text>
      </>
    ),
  },
  {
    name: "Outlook",
    state: "border-[#76b9ed]",
    icon: (
      <>
        <path d="M6 1.500h8.500v11H6z" fill="#3aa0e8" />
        <path d="M10 1.500h4.500V6H10z" fill="#7fd0fa" />
        <rect x="1" y="4" width="8" height="8" rx="1" fill="#1263b8" />
        <circle cx="5" cy="8" r="2" fill="none" stroke="#fff" strokeWidth="1.200" />
        <path d="M7.500 9.500h8V15h-8z" fill="#f3c577" />
        <path d="m7.500 9.500 4 3 4-3" fill="none" stroke="#a76f2a" strokeWidth=".7" />
      </>
    ),
  },
  {
    name: "Word",
    state: "",
    icon: (
      <>
        <path d="M5 2h10v12H5z" fill="#2b7cd3" />
        <path d="M5 2h10v3.500H5z" fill="#5ab1f0" />
        <path d="M1.500 4.500h7v7h-7z" fill="#164f9e" />
        <path d="m3 6 .9 4L5 6.500 6.100 10 7 6" fill="none" stroke="#fff" strokeWidth=".9" />
      </>
    ),
  },
  {
    name: "Excel",
    state: "border-[#76b9ed] bg-[#4a6461]",
    icon: (
      <>
        <path d="M5 2h10v12H5z" fill="#21a366" />
        <path d="M10 2h5v4h-5z" fill="#43cf86" />
        <path d="M1.500 4.500h7v7h-7z" fill="#0d6b38" />
        <path d="m3.500 6 3 4M6.500 6l-3 4" stroke="#fff" />
      </>
    ),
  },
  {
    name: "Chrome",
    state: "border-[#76b9ed]",
    icon: (
      <>
        <circle cx="8" cy="8" r="7" fill="#e34133" />
        <path d="M8 8 1.940 4.500A7 7 0 0 0 8 15z" fill="#34a053" />
        <path d="M8 8v7A7 7 0 0 0 14.060 4.500H8z" fill="#fbc116" />
        <circle cx="8" cy="8" r="3.300" fill="#fff" />
        <circle cx="8" cy="8" r="2.500" fill="#4285e8" />
      </>
    ),
  },
  {
    name: "Acrobat",
    state: "border-[#76b9ed]",
    icon: (
      <>
        <rect x="1.500" y="1.500" width="13" height="13" rx="1.500" fill="#470d0d" />
        <path d="M4 12C7 10 8.500 7 8 3.500 7.500 7 9.500 10 12.500 10 9 9 6 10 4 12z" fill="none" stroke="#f3e9e9" strokeWidth=".9" />
      </>
    ),
  },
  {
    name: "Jasperactive",
    state: "border-[#76b9ed]",
    icon: (
      <>
        <circle cx="8" cy="8" r="7" fill="#b8232c" />
        <circle cx="8" cy="8" r="4.800" fill="#fff" />
        <path d="M9 5v4.500q0 1.500-2.500 1" fill="none" stroke="#b8232c" strokeWidth="1.500" />
      </>
    ),
  },
  {
    name: "OBS Studio",
    state: "border-[#76b9ed]",
    icon: (
      <>
        <circle cx="8" cy="8" r="6.500" fill="#26272b" stroke="#cfcfcf" strokeWidth=".9" />
        <path d="M8 7.500Q5 6.500 6.500 3.500M8.300 8.200q3-1 4.300 2M7.600 8.500q-.5 3-3.800 2.500" fill="none" stroke="#cfcfcf" strokeWidth="1.300" />
      </>
    ),
  },
];

const Taskbar = () => (
  <footer className="flex h-6 items-center bg-gradient-to-r from-[#22393f] via-[#22383f] to-[#1b2944] text-white">
    <button aria-label="Start" className="flex w-[29px] justify-center">
      <svg width="10" height="10" viewBox="0 0 10 10" fill="#fff"><path d="M0 1.300 4.500.7v4H0zM5 .6 10 0v4.700H5zM0 5.200h4.500v4L0 8.600zM5 5.200h5V10l-5-.7z" /></svg>
    </button>
    <div className="flex h-full w-[206px] items-center bg-[#f0f0f0] pl-[7px] text-[#444]">
      <svg width="10" height="10" viewBox="0 0 10 10" fill="none" stroke="currentColor"><circle cx="6" cy="4" r="3.300" /><path d="M3.700 6.300.5 9.500" /></svg>
      <input aria-label="Taskbar search" placeholder="Type here to search" className="ml-[7px] w-40 bg-transparent text-[9px] outline-none placeholder:text-[#555]" />
    </div>
    <div className="flex h-full w-[383px]">
      {TASKBAR.map((app) => (
        <button key={app.name} aria-label={app.name} className="flex flex-1 flex-col items-center px-[3px]">
          <span className={`flex w-full flex-1 items-center justify-center border-b ${app.state || "border-transparent"}`}>
            <svg width="16" height="16" viewBox="0 0 16 16">{app.icon}</svg>
          </span>
        </button>
      ))}
    </div>
    <div className="ml-auto flex items-center pr-4">
      <Chevron />
      <svg className="ml-[5px]" width="9" height="8" viewBox="0 0 9 8"><path d="M0 1h9v6H0z" fill="#f3d3a0" /><path d="m0 1 4.500 3.500L9 1" fill="none" stroke="#a0702f" /></svg>
      <svg className="ml-[5px]" width="10" height="7" viewBox="0 0 10 7"><path d="M2.500 6.500a2.200 2.200 0 0 1-.2-4.200A3 3 0 0 1 7.500 2a2.300 2.300 0 0 1 0 4.500z" fill="#2391dd" /></svg>
      <svg className="ml-[5px]" width="10" height="9" viewBox="0 0 10 9" fill="none" stroke="#fff" strokeWidth=".8"><path d="M3 1.500h6.500v5H4M5 8.500h3M6.500 6.500v2M.5.500h2.500v3H.5zM1.700 3.500v5" /></svg>
      <svg className="ml-1" width="10" height="8" viewBox="0 0 10 8" fill="none" stroke="#fff" strokeWidth=".8"><path d="M.5 3v2H2l2 2V1L2 3zM5.500 2.500q1 1.500 0 3M7 1.500q1.700 2.500 0 5M8.500.500q2 3.500 0 7" /></svg>
      <svg className="ml-[7px]" width="10" height="10" viewBox="0 0 10 10" fill="none" stroke="#fff" strokeWidth=".8"><path d="M3.500 6.500 7.500 1l1.500 1-4 5.500-2 .8zM3 5Q.5 5 1 7.500T5 9t2.500-3H9" /></svg>
      <p className="ml-[6px] text-center text-[7px] leading-[11px]">11:49 AM<br />10/8/2021</p>
      <svg className="ml-[10px]" width="11" height="11" viewBox="0 0 11 11" fill="none" stroke="#fff" strokeWidth=".9"><path d="M.8 1h9.400v7H7.500L5.500 10V8H.8z" /></svg>
    </div>
  </footer>
);

const App: React.FC = () => {
  return (
    <div className="min-h-screen bg-black pr-[94px] pl-[33px] font-['Open_Sans','Noto_Sans',sans-serif]">
      <div className="bg-[#16253d] pr-[2px]">
        <TitleBar />
        <RibbonTabs />
        <Ribbon />
        <FormulaBar />
        <div className="flex">
          <main className="min-w-0 flex-1">
            <div className="flex h-[332px]">
              <div className="relative min-w-0 flex-1 overflow-hidden bg-white">
                <Grid />
                <Charts />
              </div>
              <VerticalScroll />
            </div>
            <SheetTabs />
          </main>
          <FormatPane />
        </div>
        <StatusBar />
        <div className="h-1 border-b-2 border-[#4f9d74] bg-gradient-to-r from-[#12756f] from-20% to-[#7fa893] to-30%" />
        <div className="bg-[#e6e6e6]">
          <JasperHeader />
          <div className="flex">
            <ExerciseList />
            <Instructions />
          </div>
        </div>
      </div>
      <Taskbar />
    </div>
  );
};

export default App;
